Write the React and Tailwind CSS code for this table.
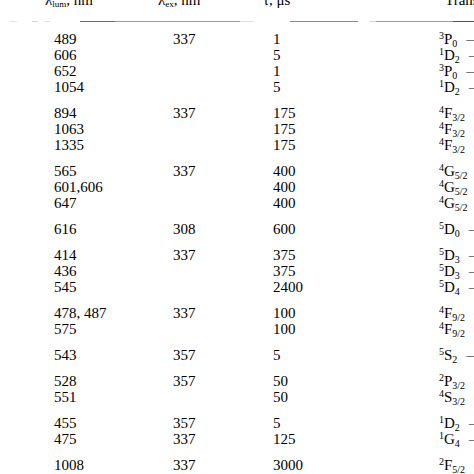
const groups = [
  [
    ['489', '337', '1', ['3', 'P', '0', '3', 'H', '4']],
    ['606', '', '5', ['1', 'D', '2', '3', 'H', '4']],
    ['652', '', '1', ['3', 'P', '0', '3', 'F', '2']],
    ['1054', '', '5', ['1', 'D', '2', '3', 'F', '4']],
  ],
  [
    ['894', '337', '175', ['4', 'F', '3/2', '4', 'I', '9/2']],
    ['1063', '', '175', ['4', 'F', '3/2', '4', 'I', '11/2']],
    ['1335', '', '175', ['4', 'F', '3/2', '4', 'I', '13/2']],
  ],
  [
    ['565', '337', '400', ['4', 'G', '5/2', '6', 'H', '5/2']],
    ['601,606', '', '400', ['4', 'G', '5/2', '6', 'H', '7/2']],
    ['647', '', '400', ['4', 'G', '5/2', '6', 'H', '9/2']],
  ],
  [['616', '308', '600', ['5', 'D', '0', '7', 'F', '2']]],
  [
    ['414', '337', '375', ['5', 'D', '3', '7', 'F', '5']],
    ['436', '', '375', ['5', 'D', '3', '7', 'F', '4']],
    ['545', '', '2400', ['5', 'D', '4', '7', 'F', '5']],
  ],
  [
    ['478, 487', '337', '100', ['4', 'F', '9/2', '6', 'H', '15/2']],
    ['575', '', '100', ['4', 'F', '9/2', '6', 'H', '13/2']],
  ],
  [['543', '357', '5', ['5', 'S', '2', '5', 'I', '8']]],
  [
    ['528', '357', '50', ['2', 'P', '3/2', '4', 'I', '11/2']],
    ['551', '', '50', ['4', 'S', '3/2', '4', 'I', '15/2']],
  ],
  [
    ['455', '357', '5', ['1', 'D', '2', '3', 'F', '4']],
    ['475', '337', '125', ['1', 'G', '4', '3', 'H', '6']],
  ],
  [['1008', '337', '3000', ['2', 'F', '5/2', '2', 'F', '7/2']]],
];

// scanned header rule: broken segments [width, colour]
const rule = [
  [10, ''],
  [7, 'bg-[#e2e2e2]'],
  [15, ''],
  [6, 'bg-[#d4d4d4]'],
  [7, ''],
  [5, 'bg-[#dcdcdc]'],
  [30, ''],
  [35, 'bg-[#6b6b6b]'],
  [125, 'bg-[#9a9a9a]'],
  [14, 'bg-[#e0e0e0]'],
  [36, ''],
  [68, 'bg-[#8c8c8c]'],
  [12, ''],
  [6, 'bg-[#d0d0d0]'],
  [77, 'bg-[#9a9a9a]'],
  [26, 'bg-[#555]'],
];

function Term({ mult, letter, j }) {
  return (
    <>
      <sup className="text-[10px]">{mult}</sup>
      {letter}
      <sub className="text-[10px]">{j}</sub>
    </>
  );
}

function Row({ row }) {
  const [lum, ex, tau, t] = row;
  return (
    <div className="flex h-[16px] whitespace-nowrap leading-[16px]">
      <div className="w-[173px] shrink-0 pl-[54px]">{lum}</div>
      <div className="w-[100px] shrink-0">{ex}</div>
      <div className="w-[166px] shrink-0">{tau}</div>
      <div className="shrink-0">
        <Term mult={t[0]} letter={t[1]} j={t[2]} />
        <span className="ml-[9px]">——</span> <Term mult={t[3]} letter={t[4]} j={t[5]} />
      </div>
    </div>
  );
}

export default function App() {
  return (
    <div className="h-[474px] w-[474px] overflow-hidden bg-white font-['Liberation_Serif',serif] text-[15px] text-black">
      <div className="mt-[-8px] flex h-[16px] whitespace-nowrap leading-[16px]">
        <div className="w-[158px] shrink-0 pl-[45px]">
          λ<sub className="text-[9px]">lum</sub>, nm
        </div>
        <div className="w-[105px] shrink-0">
          λ<sub className="text-[9px]">ex</sub>, nm
        </div>
        <div className="w-[182px] shrink-0">τ, μs</div>
        <div className="shrink-0">Transition</div>
      </div>
      <div className="mt-[13px] flex h-px">
        {rule.map(([w, c], i) => (
          <div key={i} className={`shrink-0 ${c}`} style={{ width: w }} />
        ))}
      </div>
      <div className="mt-[9px] flex flex-col gap-[10px]">
        {groups.map((g, gi) => (
          <div key={gi}>
            {g.map((row, ri) => (
              <Row key={ri} row={row} />
            ))}
          </div>
        ))}
      </div>
    </div>
  );
}
